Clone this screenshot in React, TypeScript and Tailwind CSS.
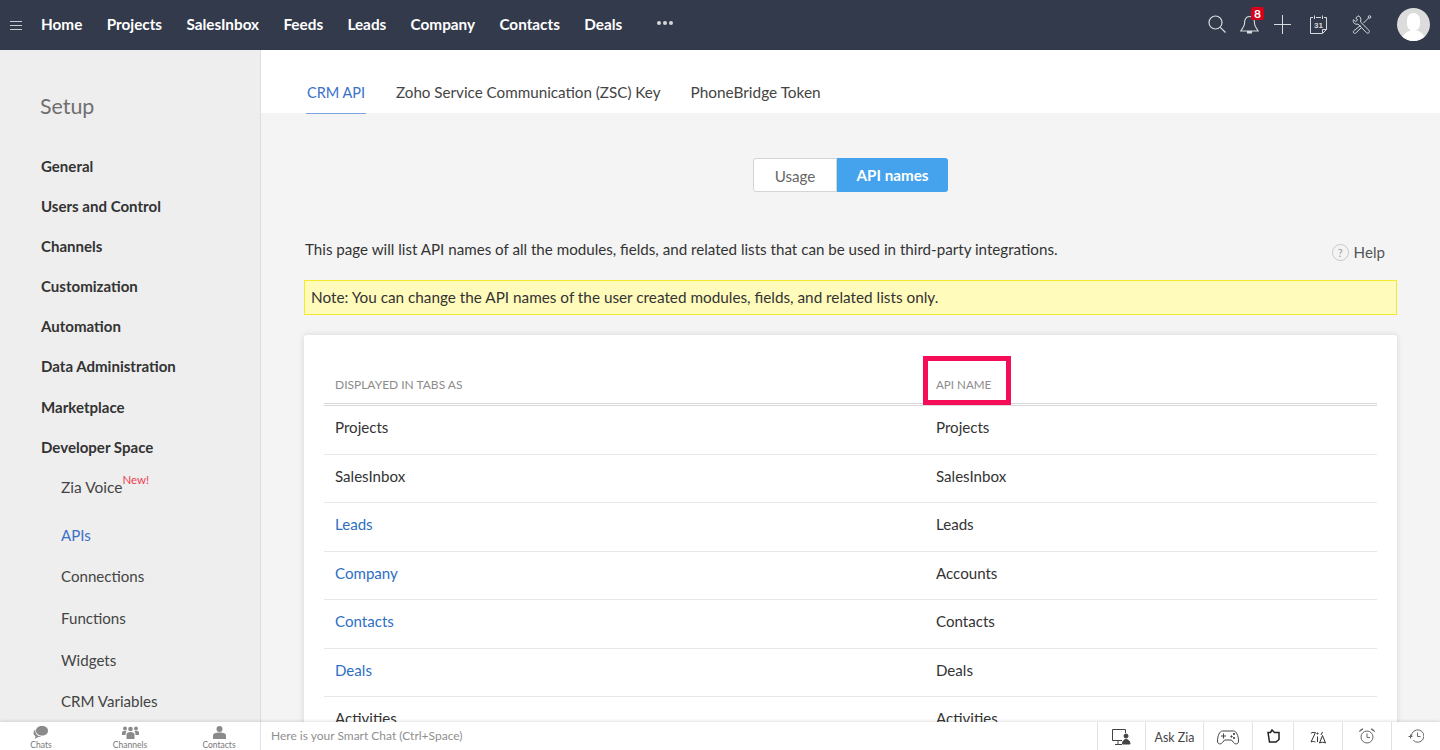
const navItems = ['Home', 'Projects', 'SalesInbox', 'Feeds', 'Leads', 'Company', 'Contacts', 'Deals'];

const rows = [
  { tab: 'Projects', api: 'Projects', link: false },
  { tab: 'SalesInbox', api: 'SalesInbox', link: false },
  { tab: 'Leads', api: 'Leads', link: true },
  { tab: 'Company', api: 'Accounts', link: true },
  { tab: 'Contacts', api: 'Contacts', link: true },
  { tab: 'Deals', api: 'Deals', link: true },
  { tab: 'Activities', api: 'Activities', link: false },
];

function TopBar() {
  return (
    <header className="h-[50px] shrink-0 bg-[#333a4b] flex items-center text-white">
      <div className="w-[41px] pl-[10px] flex flex-col gap-[3px]">
        <span className="w-[12px] h-px bg-[#c9ccd2]" />
        <span className="w-[12px] h-px bg-[#c9ccd2]" />
        <span className="w-[12px] h-px bg-[#c9ccd2]" />
      </div>
      <nav className="flex items-center gap-[24.3px] text-[15.3px] font-bold -mt-[1px]">
        {navItems.map((n) => (
          <span key={n}>{n}</span>
        ))}
      </nav>
      <div className="ml-[35px] -mt-[5px] flex gap-[2px]">
        <span className="w-[4px] h-[4px] rounded-full bg-[#d5d7dc]" />
        <span className="w-[4px] h-[4px] rounded-full bg-[#d5d7dc]" />
        <span className="w-[4px] h-[4px] rounded-full bg-[#d5d7dc]" />
      </div>
      <div className="ml-auto -mt-[2px] flex items-center text-[#d8dade]">
        {/* search */}
        <svg width="18" height="18" viewBox="0 0 18 18" fill="none" stroke="currentColor" strokeWidth="1.2" className="mr-[14px]">
          <circle cx="7.500" cy="7.500" r="6.500" />
          <path d="M12.300 12.300L17.500 17.500" />
        </svg>
        {/* bell */}
        <div className="relative mr-[15px]">
          <svg width="19" height="19" viewBox="0 0 19 19" fill="none" stroke="currentColor" strokeWidth="1.100" className="block">
            <path d="M9.500 1.500C5.500 1.500 4.500 5 4.500 8.500c0 3-2.500 5-3.700 7.500h17.400c-1.200-2.500-3.700-4.500-3.700-7.500 0-3.500-1-7-5-7z" />
            <path d="M7.500 16.500h4v1.500h-4z" fill="currentColor" />
          </svg>
          <span className="absolute -top-[8px] left-[11px] w-[13px] h-[13px] rounded-[2px] bg-[#d6001c] text-white text-[12px] font-bold leading-[13px] text-center">8</span>
        </div>
        {/* plus */}
        <svg width="17" height="19" viewBox="0 0 17 19" fill="none" stroke="currentColor" strokeWidth="1" className="mr-[19px]">
          <path d="M0 9.500h17M8.500 0v19" />
        </svg>
        {/* calendar */}
        <svg width="17" height="19" viewBox="0 0 17 19" fill="none" stroke="currentColor" strokeWidth="1" className="mr-[25px]">
          <path d="M3 2.500H.500v16h12l4-4v-12H14M6 2.500h5" />
          <path d="M4.500 .500v3.500M12.500 .500v3.500M12.500 18v-3.500h4" />
          <text x="4" y="13" fontSize="8" fontWeight="700" fill="currentColor" stroke="none" fontFamily="'Liberation Sans', sans-serif">31</text>
        </svg>
        {/* tools */}
        <svg width="20" height="19" viewBox="0 0 20 19" fill="none" stroke="currentColor" strokeWidth="1" className="mr-[25px]">
          <path d="M6 .800L3.800 3l1.800 2-2 1.600L1.500 4.700C.300 7.500 3 10 6 9l8.500 8.700c1.600 1.500 4-.800 2.400-2.400L8.500 7C9.500 4 8.500 1.200 6 .800z" />
          <path d="M8.500 10.500L1.800 15.800c-1.500 1.500.500 3.500 2 2.200L10 12" />
          <path d="M11.500 8l5-5" />
          <circle cx="17.500" cy="2" r="1.300" />
        </svg>
        <div className="relative w-[33px] h-[33px] rounded-full bg-[#dcdcdc] overflow-hidden mr-[10px]">
          <div className="absolute left-[10px] top-[5px] w-[13px] h-[18px] rounded-full bg-white" />
          <div className="absolute left-[4px] top-[22px] w-[25px] h-[14px] rounded-t-full bg-white" />
        </div>
      </div>
    </header>
  );
}

function Sidebar() {
  const top = ['General', 'Users and Control', 'Channels', 'Customization', 'Automation', 'Data Administration', 'Marketplace', 'Developer Space'];
  return (
    <aside className="w-[261px] shrink-0 bg-[#eeeeee] border-r border-[#dddddd] overflow-hidden">
      <h2 className="pl-[40px] pt-[43px] text-[21.4px] leading-[26px] text-[#6f6f6f]">Setup</h2>
      <ul className="mt-[26.5px] pl-[41px] text-[15.05px] font-bold text-[#333333]">
        {top.map((t) => (
          <li key={t} className="h-[40.2px] leading-[40px] whitespace-nowrap">{t}</li>
        ))}
      </ul>
      <ul className="pl-[61px] text-[15.1px] text-[#444444]">
        <li className="h-[48px] leading-[40px]">
          <span className="text-[15.5px]">Zia Voice</span>
          <sup className="text-[11.5px] text-[#ef4050] -top-[9px]">New!</sup>
        </li>
        <li className="h-[41px] leading-[40px] text-[#3b70c9]">APIs</li>
        <li className="h-[42px] leading-[40px]">Connections</li>
        <li className="h-[42px] leading-[40px]">Functions</li>
        <li className="h-[41px] leading-[40px]">Widgets</li>
        <li className="h-[41px] leading-[40px]">CRM Variables</li>
      </ul>
    </aside>
  );
}

function ApiTable() {
  return (
    <div className="relative mt-[20px] ml-[43px] w-[1093px] bg-white rounded-[3px] shadow-[0_0_6px_rgba(0,0,0,0.12)] px-[20px] pt-[42px] pb-[40px]">
      <div className="grid grid-cols-[601px_1fr] h-[29px] border-b-[3px] border-double border-[#d8d8d8] text-[12px] text-[#8c8c8c] uppercase">
        <span className="pl-[11px] leading-[15px]">Displayed in tabs as</span>
        <span className="pl-[11px] leading-[15px] text-[11.6px]">API Name</span>
      </div>
      {rows.map((r) => (
        <div key={r.tab} className="grid grid-cols-[601px_1fr] h-[48.5px] pb-[4px] items-center border-b border-[#e8e8e8] text-[15.1px] text-[#333333]">
          <span className={r.link ? 'pl-[11px] text-[#2e6fc4]' : 'pl-[11px]'}>{r.tab}</span>
          <span className="pl-[11px]">{r.api}</span>
        </div>
      ))}
      <div className="absolute left-[619px] top-[21px] w-[88px] h-[49px] border-[5px] border-[#f50d57]" />
    </div>
  );
}

function Main() {
  return (
    <main className="flex-1 bg-[#f4f4f4] overflow-hidden">
      <div className="h-[63px] bg-white pl-[45px] flex gap-[30px] text-[15.2px] text-[#444444]">
        <span className="w-[60px] h-[64px] pt-[31px] pl-[1px] border-b border-[#7ba4df] text-[14.5px] leading-[23px] whitespace-nowrap text-[#3b70c9]">CRM API</span>
        <span className="h-[63px] pt-[31px] leading-[23px]">Zoho Service Communication (ZSC) Key</span>
        <span className="h-[63px] pt-[31px] leading-[23px] text-[15.4px]">PhoneBridge Token</span>
      </div>
      <div className="mt-[45px] flex justify-center text-[15.2px]">
        <span className="w-[84px] h-[34px] leading-[34px] text-center bg-white border border-[#d4d4d4] rounded-l-[3px] text-[#666666]">Usage</span>
        <span className="w-[111px] h-[34px] leading-[34px] text-center bg-[#44a3ec] rounded-r-[3px] text-white font-bold">API names</span>
      </div>
      <div className="mt-[46px] ml-[44px] mr-[55px] flex justify-between text-[15.15px] leading-[22px] text-[#333333]">
        <span>This page will list API names of all the modules, fields, and related lists that can be used in third-party integrations.</span>
        <span className="flex items-center gap-[5px] mt-[3px] text-[#555555]">
          <span className="w-[17px] h-[17px] rounded-full border border-[#c8c8c8] text-[11px] leading-[15px] text-center text-[#999999]">?</span>
          Help
        </span>
      </div>
      <div className="mt-[17px] ml-[43px] w-[1093px] h-[35px] leading-[33px] pl-[6px] bg-[#fffbbb] border border-[#f5e92c] text-[15.3px] text-[#333333]">
        Note: You can change the API names of the user created modules, fields, and related lists only.
      </div>
      <ApiTable />
    </main>
  );
}

function ChatsIcon() {
  return (
    <svg width="16" height="13" viewBox="0 0 16 13" fill="#8a8a8a">
      <path d="M9 0c3.500 0 6 2 6 4.700S12.500 9.500 9 9.500c-3.500 0-6-2-6-4.800S5.500 0 9 0z" />
      <path d="M2.400 3.500C1 4.500.500 5.700.500 7c0 1.300.800 2.400 2 3.200L1.800 13l3.400-2c1 .200 2.200.100 3.300-.300C5 10.500 1.800 8 2.400 3.500z" />
    </svg>
  );
}

function ChannelsIcon() {
  return (
    <svg width="17" height="13" viewBox="0 0 17 13" fill="#8a8a8a">
      <circle cx="8.500" cy="3" r="2.300" />
      <circle cx="3" cy="2.500" r="1.900" />
      <circle cx="14" cy="2.500" r="1.900" />
      <path d="M4.500 13V8.500c0-1.500 1.500-2.500 4-2.500s4 1 4 2.500V13z" />
      <path d="M0 9V6.500C0 5.300 1.300 5 3 5c.500 0 1 0 1.500.200C3.800 6 3.500 7 3.500 9z" />
      <path d="M17 9V6.500C17 5.300 15.700 5 14 5c-.500 0-1 0-1.500.200.700.800 1 1.800 1 3.800z" />
    </svg>
  );
}

function ContactsIcon() {
  return (
    <svg width="15" height="13" viewBox="0 0 15 13" fill="#8a8a8a">
      <circle cx="7.500" cy="3" r="3" />
      <path d="M1 13V9.500C1 7.500 3.500 6.500 7.500 6.500s6.500 1 6.500 3V13z" />
    </svg>
  );
}

function BottomBar() {
  const tabs = [
    { label: 'Chats', icon: <ChatsIcon /> },
    { label: 'Channels', icon: <ChannelsIcon /> },
    { label: 'Contacts', icon: <ContactsIcon /> },
  ];
  return (
    <footer className="h-[28px] shrink-0 bg-white flex relative shadow-[0_-1px_3px_rgba(0,0,0,0.12)]">
      <div className="w-[261px] shrink-0 flex border-r border-[#e2e2e2] overflow-hidden">
        {tabs.map((t, i) => (
          <div key={t.label} className={i === 0 ? 'w-[89px] shrink-0 -ml-[3.500px] pt-[4px] flex flex-col items-center text-[8.5px] leading-[10px] text-[#777777]' : 'w-[89px] shrink-0 pt-[4px] flex flex-col items-center text-[8.5px] leading-[10px] text-[#777777]'}>
            {t.icon}
            <span className="mt-[1px]">{t.label}</span>
          </div>
        ))}
      </div>
      <span className="pl-[10px] leading-[28px] text-[12px] text-[#8f8f8f]">Here is your Smart Chat (Ctrl+Space)</span>
      <div className="ml-auto flex text-[#444444]">
        <div className="w-[48px] border-l border-[#e2e2e2] flex items-center justify-center pt-[2px]">
          <svg width="19" height="16" viewBox="0 0 19 16" fill="none" stroke="#444" strokeWidth="1">
            <path d="M10 11.500H.500V.500h13v3.500M6 11.500v4M3 15.500h7" />
            <circle cx="14" cy="7" r="2" fill="#444" />
            <path d="M10.500 15c0-3 1.500-4.500 3.500-4.500s4 1.500 4 4.500z" fill="#444" />
          </svg>
        </div>
        <div className="w-[58px] border-l border-[#e2e2e2] text-center leading-[31px] text-[12.4px]">Ask Zia</div>
        <div className="w-[49px] border-l border-[#e2e2e2] flex items-center justify-center pt-[2px]">
          <svg width="22" height="15" viewBox="0 0 22 15" fill="none" stroke="#444" strokeWidth="1">
            <path d="M5.500 1h11c3 0 5 5 5 10 0 3-2.500 4-5 1.500L14.500 10h-7l-2 2.500C3 15 .500 14 .500 11c0-5 2-10 5-10z" />
            <path d="M6.500 3.500v5M4 6h5" />
            <circle cx="14.500" cy="6.500" r=".7" fill="#444" />
            <circle cx="17" cy="4" r=".7" fill="#444" />
            <circle cx="17" cy="8" r=".7" fill="#444" />
          </svg>
        </div>
        <div className="w-[41px] border-l border-[#e2e2e2] flex items-center justify-center">
          <svg width="13" height="14" viewBox="0 0 13 14" fill="none" stroke="#222" strokeWidth="1.500">
            <path d="M1 3.500h2.500L5 1l2.500 2.500H12v7L9 13H2.500z" />
          </svg>
        </div>
        <div className="w-[49px] border-l border-[#e2e2e2] flex items-center justify-center pt-[2px]">
          <svg width="16" height="13" viewBox="0 0 16 13" fill="none" stroke="#333" strokeWidth="1">
            <path d="M.800 2.500C2 1 4 1.500 5.500 1.500L1 11c1.500-1 3-.500 4.500 0" />
            <path d="M7.500 5.500v5.500" />
            <path d="M9.500 12l3-7.500 3 7.500c-2-1-4-1-6 0z" />
            <circle cx="7.500" cy="2.500" r=".6" fill="#333" />
            <path d="M11 4l1.500-3" />
          </svg>
        </div>
        <div className="w-[49px] border-l border-[#e2e2e2] flex items-center justify-center">
          <svg width="16" height="16" viewBox="0 0 16 16" fill="none" stroke="#666" strokeWidth="1">
            <circle cx="8" cy="9" r="6" />
            <path d="M8 5.500V9.500h3" />
            <path d="M.500 3.500C1 2 2.500 1 4 1zM15.500 3.500C15 2 13.500 1 12 1z" fill="#666" />
          </svg>
        </div>
        <div className="w-[49px] border-l border-[#e2e2e2] flex items-center justify-center">
          <svg width="16" height="14" viewBox="0 0 16 14" fill="none" stroke="#666" strokeWidth="1">
            <path d="M3.500 7a6.200 6.200 0 1 1 1.800 4.400" />
            <path d="M.500 7.500h4M2.500 5.500v4" />
            <path d="M9.500 3.500V7.500h3" />
          </svg>
        </div>
      </div>
    </footer>
  );
}

export default function App() {
  return (
    <div className="h-screen flex flex-col overflow-hidden font-['Lato',sans-serif]">
      <TopBar />
      <div className="flex-1 flex min-h-0">
        <Sidebar />
        <Main />
      </div>
      <BottomBar />
    </div>
  );
}
